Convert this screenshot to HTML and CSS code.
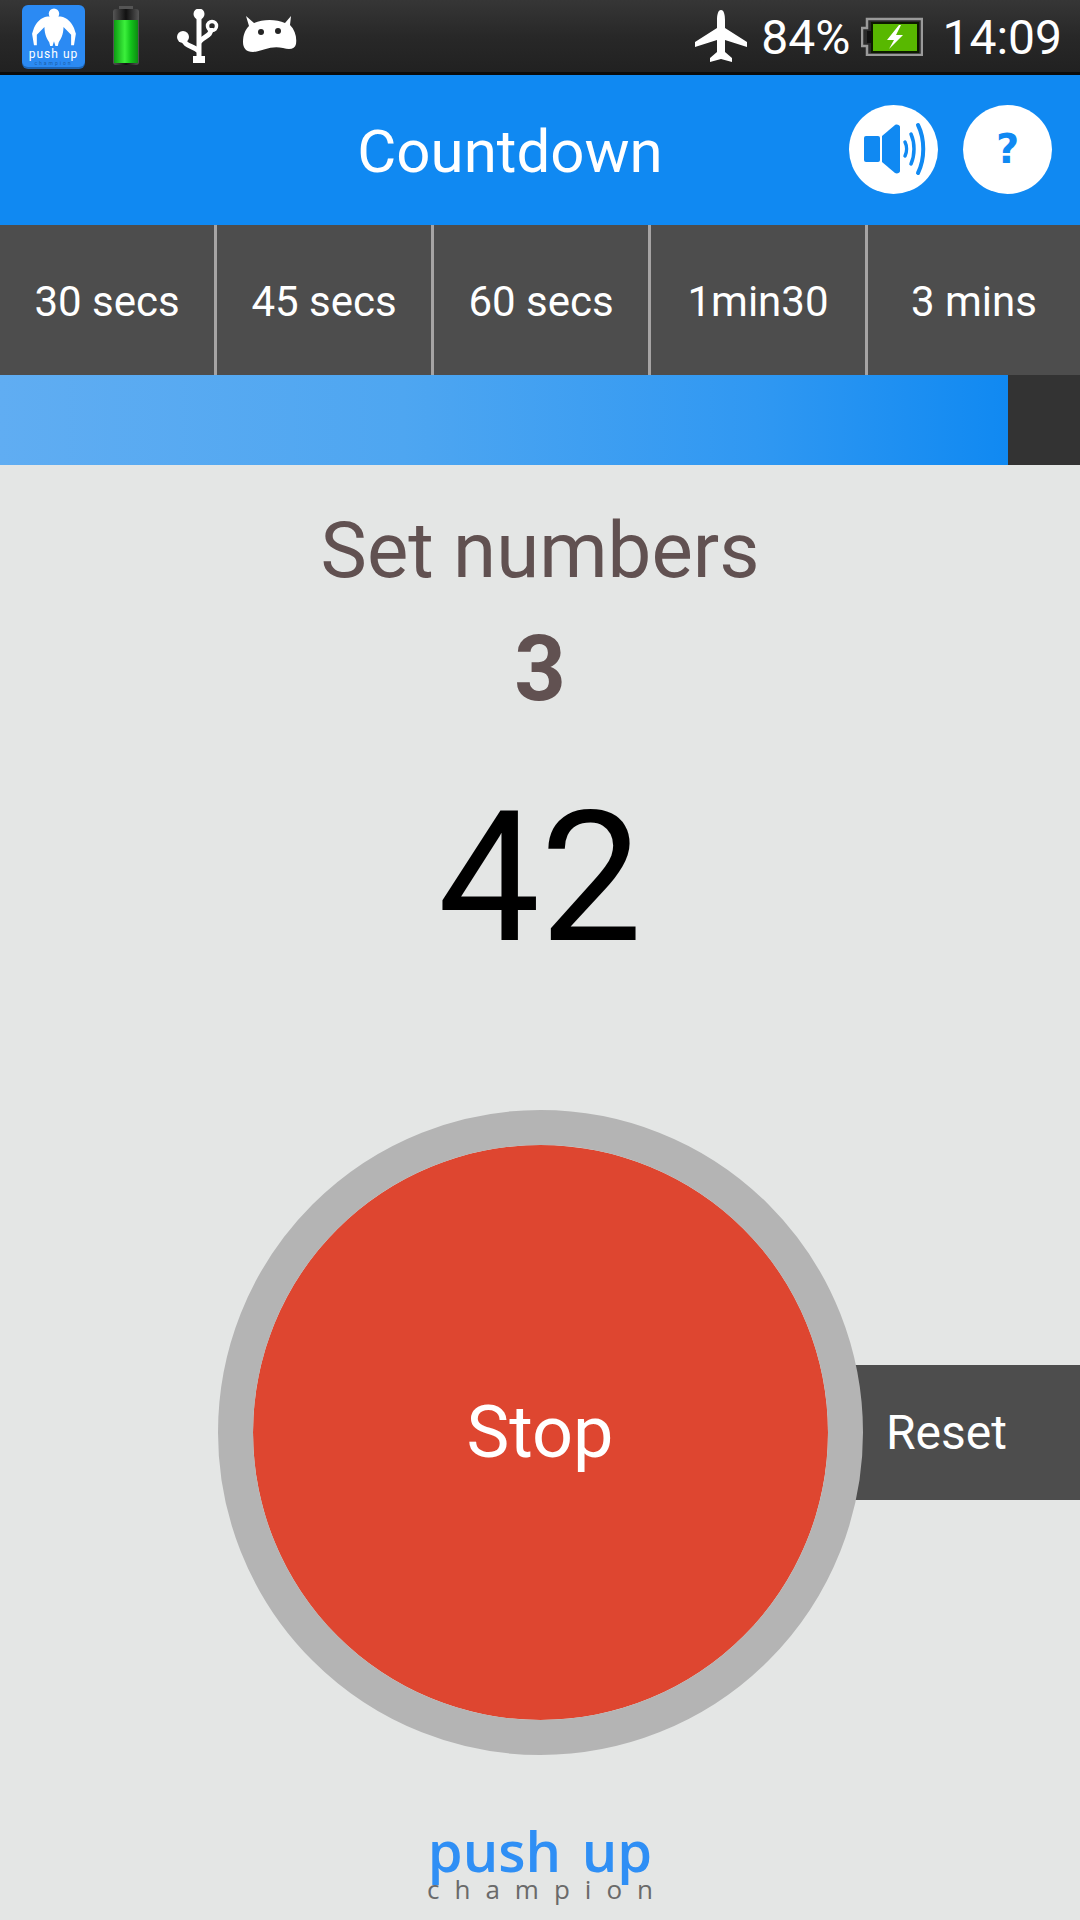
FILE: index.html
```html
<!DOCTYPE html>
<html lang="en">
<head>
<meta charset="utf-8">
<title>Countdown</title>
<link rel="stylesheet" href="styles.css">
</head>
<body>
<div class="screen">
  <header class="status">
    <div class="status-left">
      <div class="app-icon">
        <svg class="app-figure" viewBox="0 0 63 42" width="63" height="42">
          <circle cx="32" cy="6" r="5.5" fill="#fff"/>
          <path d="M25 9 C18 10 14 15 11 21 L9 27 L11 39 L14 39 L14 28 L22 20 C22 28 25 33 27 36 L28 40 H36 L37 36 C39 33 42 28 42 20 L50 28 L50 39 L53 39 L55 27 L53 21 C50 15 46 10 39 9 Z" fill="#fff"/>
          <path d="M30.500 40 L32 35 L33.500 40 Z" fill="#2b8af3"/>
        </svg>
        <span class="app-name">push up</span>
        <span class="app-sub">champion</span>
      </div>
      <svg class="ic-batt" viewBox="0 0 28 60" width="28" height="60">
        <defs>
          <linearGradient id="gr" x1="0" x2="1" y1="0" y2="0">
            <stop offset="0" stop-color="#0d9c12"/><stop offset=".45" stop-color="#3cf03c"/><stop offset=".7" stop-color="#12c41a"/><stop offset="1" stop-color="#0d8c12"/>
          </linearGradient>
          <linearGradient id="gk" x1="0" x2="1" y1="0" y2="0">
            <stop offset="0" stop-color="#555"/><stop offset=".5" stop-color="#111"/><stop offset="1" stop-color="#555"/>
          </linearGradient>
        </defs>
        <rect x="7" y="0" width="14" height="4" fill="#555"/>
        <rect x="1" y="3" width="26" height="56" rx="3" fill="url(#gk)"/>
        <rect x="2" y="14" width="24" height="43" fill="url(#gr)"/>
      </svg>
      <svg class="ic-usb" viewBox="0 0 42 54" width="42" height="54">
        <g fill="none" stroke="#fff" stroke-width="5">
          <path d="M22 4 V48"/>
          <path d="M6 29 C8 38 15 36 22 42"/>
          <path d="M34 19 C34 28 28 26 22 33"/>
          <circle cx="35" cy="17" r="4.500" stroke-width="3.500"/>
        </g>
        <circle cx="22" cy="5" r="5.500" fill="#fff"/>
        <circle cx="6" cy="28" r="6" fill="#fff"/>
        <rect x="16" y="47" width="12" height="7" fill="#fff"/>
      </svg>
      <svg class="ic-droid" viewBox="0 0 54 42" width="54" height="42">
        <path d="M3 1 L11 8 C20 4 33 4 42 8 L48 1 L47 10 C52 15 54 22 53 29 C52 34 47 35 40 33 C28 30 20 36 10 37 C3 37 0 33 0 27 C0 20 2 15 6 11 Z" fill="#fff"/>
        <circle cx="18" cy="17" r="3" fill="#242424"/>
        <circle cx="35" cy="16" r="3" fill="#242424"/>
      </svg>
    </div>
    <div class="status-right">
      <svg class="ic-plane" viewBox="0 0 52 52" width="52" height="52">
        <path d="M26 0 C29 0 30 5 30 10 V18 L52 32 V37 L30 30 V42 L37 48 V52 L26 49 L15 52 V48 L22 42 V30 L0 37 V32 L22 18 V10 C22 5 23 0 26 0 Z" fill="#fff"/>
      </svg>
      <span class="pct">84%</span>
      <svg class="ic-charge" viewBox="0 0 62 39" width="62" height="39">
        <path d="M6 2 H61 V38 H6 V29 H1 V11 H6 Z" fill="#2a2a2a" stroke="#9a9a9a" stroke-width="2.500"/>
        <rect x="6" y="14" width="6" height="12" fill="#111"/>
        <rect x="11" y="6" width="46" height="29" fill="#58b800" stroke="#0d1a00" stroke-width="2"/>
        <path d="M38 8 L26 23 H33 L28 32 L42 18 H35 L40 8 Z" fill="#fff"/>
      </svg>
      <span class="clock">14:09</span>
    </div>
  </header>
  <div class="status-line"></div>

  <div class="appbar">
    <h1 class="title">Countdown</h1>
    <button class="round-btn round-sound" type="button" aria-label="Sound">
      <svg viewBox="0 0 62 54" width="62" height="54">
        <rect x="0" y="14" width="16" height="26" rx="2" fill="#1089f2"/>
        <path d="M18 14 L31 3 C33 2 36 3 36 5 V49 C36 51 33 52 31 51 L18 40 Z" fill="#1089f2"/>
        <g fill="none" stroke="#1089f2" stroke-linecap="round">
          <path d="M41 20 C43 24 43 30 41 34" stroke-width="3.500"/>
          <path d="M47 12 C51 21 51 33 47 42" stroke-width="3.500"/>
          <path d="M54 3 C61 17 61 37 54 51" stroke-width="4"/>
        </g>
      </svg>
    </button>
    <button class="round-btn" type="button" aria-label="Help"><span class="help">?</span></button>
  </div>

  <nav class="tabs">
    <div class="tab">30 secs</div>
    <div class="tab">45 secs</div>
    <div class="tab">60 secs</div>
    <div class="tab">1min30</div>
    <div class="tab">3 mins</div>
  </nav>

  <div class="progress"><div class="progress-fill"></div></div>

  <main class="content">
    <div class="set-label">Set numbers</div>
    <div class="set-value">3</div>
    <div class="count">42</div>
    <div class="stage">
      <div class="reset">Reset</div>
      <div class="ring"><div class="stop">Stop</div></div>
    </div>
    <div class="logo">
      <div class="logo-top">push up</div>
      <div class="logo-sub">champion</div>
    </div>
  </main>
</div>
</body>
</html>
```
FILE: styles.css
```css
* { box-sizing: border-box; }
html, body { margin: 0; padding: 0; }
body { width: 1080px; height: 1920px; overflow: hidden; font-family: Roboto, "Liberation Sans", sans-serif; background: #e4e6e5; }
.screen { width: 1080px; height: 1920px; display: flex; flex-direction: column; }

.status { height: 72px; display: flex; justify-content: space-between; align-items: center; background: linear-gradient(#363636 0, #282828 50%, #212121 100%); color: #fff; }
.status-left { display: flex; align-items: center; padding-left: 22px; }
.status-right { display: flex; align-items: center; padding-right: 18px; }
.status-line { height: 3px; background: #0b0b0b; }

.app-icon { width: 63px; height: 62px; border-radius: 6px; background: #2b8af3; box-shadow: 0 2px 0 #1d66b8; display: flex; flex-direction: column; align-items: center; overflow: hidden; }
.app-figure { display: block; flex: none; height: 40px; margin-top: 3px; }
.app-name { font-size: 12px; line-height: 11px; margin-top: 1px; color: #fff; white-space: nowrap; letter-spacing: 1px; }
.app-sub { font-size: 5px; line-height: 6px; color: #1c5fa8; letter-spacing: 2px; white-space: nowrap; }
.ic-batt { margin-left: 27px; }
.ic-usb { margin-left: 37px; }
.ic-droid { margin-left: 24px; }
.pct { font-size: 48px; line-height: 72px; margin-left: 14px; padding-top: 4px; }
.ic-charge { margin-left: 11px; }
.clock { font-size: 48px; line-height: 72px; margin-left: 19px; padding-top: 4px; }

.appbar { height: 150px; background: #1089f2; display: flex; align-items: center; justify-content: flex-end; gap: 25px; padding: 0 28px 2px 0; position: relative; }
.title { position: absolute; left: 0; top: 2px; width: 1020px; margin: 0; text-align: center; font-size: 60px; line-height: 150px; font-weight: 400; color: #fff; }
.round-btn { width: 89px; height: 89px; border: 0; padding: 0; border-radius: 50%; background: #fff; display: flex; align-items: center; justify-content: center; }
.round-sound svg { display: block; margin-left: 2px; }
.help { font-size: 40px; font-weight: 900; color: #1089f2; font-family: "DejaVu Sans", sans-serif; line-height: 1; }

.tabs { height: 150px; display: grid; grid-template-columns: repeat(4, 217px) 1fr; background: #4d4d4d; }
.tab { display: flex; align-items: center; justify-content: center; color: #fff; font-size: 42px; padding-top: 2px; border-right: 3px solid #a6a4a4; }
.tab:last-child { border-right: 0; }

.progress { height: 90px; background: #333; }
.progress-fill { width: 1008px; height: 100%; background: linear-gradient(90deg, #60adf2 0, #4ea6f1 40%, #3098f2 75%, #1089f2 100%); }

.content { flex: 1; display: flex; flex-direction: column; align-items: center; min-height: 0; }
.set-label { font-size: 78px; line-height: 84px; margin-top: 44px; color: #615151; }
.set-value { font-size: 90px; line-height: 100px; margin-top: 27px; font-weight: 700; color: #615151; }
.count { font-size: 182px; line-height: 212px; margin-top: 52px; color: #000; }

.stage { width: 100%; height: 645px; margin-top: 126px; display: flex; justify-content: center; position: relative; }
.ring { width: 645px; height: 645px; border-radius: 50%; background: #de4630; border: 35px solid #b4b4b4; display: flex; align-items: center; justify-content: center; position: relative; background-clip: padding-box; }
.stop { font-size: 72px; color: #fff; }
.reset { position: absolute; right: 0; top: 255px; width: 240px; height: 135px; padding-left: 46px; display: flex; align-items: center; background: #4d4d4d; color: #fff; font-size: 48px; }

.logo { margin-top: 69px; display: flex; flex-direction: column; align-items: center; }
.logo-top { font-family: "Open Sans", sans-serif; font-size: 56px; line-height: 52px; font-weight: 600; color: #2f8ff5; word-spacing: 6px; }
.logo-sub { font-family: "Open Sans", sans-serif; font-size: 26px; line-height: 26px; color: #6a6a6a; letter-spacing: 15px; margin-right: -15px; }
```
